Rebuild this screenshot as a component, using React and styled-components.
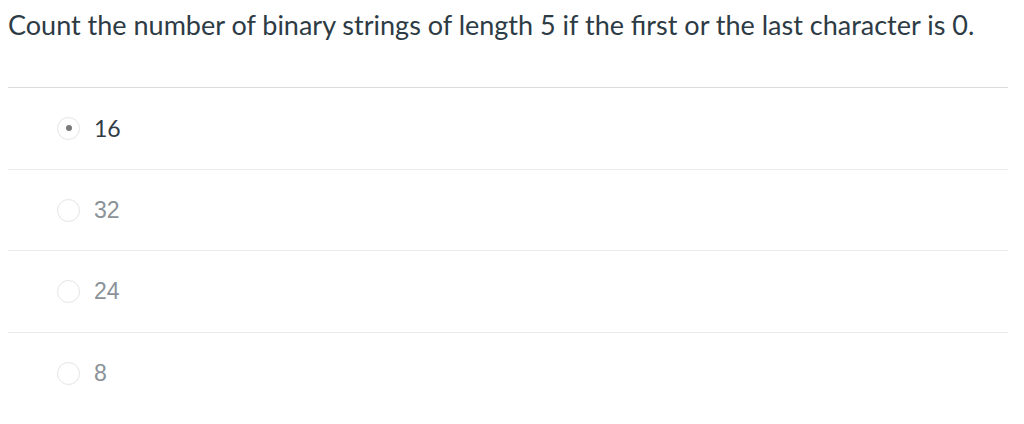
import React from 'react';
import styled, { createGlobalStyle } from 'styled-components';

const GlobalStyle = createGlobalStyle`
  body {
    margin: 0;
    background: #ffffff;
    font-family: 'Lato', sans-serif;
  }
`;

const Wrapper = styled.div`
  padding: 0 16px 0 8px;
`;

const Question = styled.div`
  font-family: 'Lato', sans-serif;
  font-size: 27px;
  color: #2d3b45;
  line-height: 34px;
  padding-top: 8px;
  height: 88px;
  box-sizing: border-box;
  border-bottom: 1px solid #d9dcde;
`;

const Answer = styled.label`
  display: flex;
  align-items: center;
  gap: 14px;
  height: 81.7px;
  box-sizing: border-box;
  padding-left: 49px;
  border-bottom: ${p => (p.last ? 'none' : '1px solid #e8eaec')};
`;

const Radio = styled.span`
  width: 23px;
  height: 23px;
  border-radius: 50%;
  border: 1px solid #e2e4e6;
  box-sizing: border-box;
  display: flex;
  align-items: center;
  justify-content: center;

  &::after {
    content: '';
    width: 6px;
    height: 6px;
    border-radius: 50%;
    background: ${p => (p.checked ? '#7a7a7a' : 'transparent')};
  }
`;

const AnswerText = styled.span`
  font-family: ${p => (p.checked ? "'Lato', sans-serif" : "'Liberation Sans', Arial, sans-serif")};
  font-size: 23px;
  color: ${p => (p.checked ? '#2d3b45' : '#8a9298')};
`;

const answers = [
  { text: '16', checked: true },
  { text: '32' },
  { text: '24' },
  { text: '8' },
];

function App() {
  return (
    <Wrapper>
      <GlobalStyle />
      <Question>Count the number of binary strings of length 5 if the first or the last character is 0.</Question>
      {answers.map((a, i) => (
        <Answer key={a.text} last={i === answers.length - 1}>
          <Radio checked={a.checked} />
          <AnswerText checked={a.checked}>{a.text}</AnswerText>
        </Answer>
      ))}
    </Wrapper>
  );
}

export default App;
